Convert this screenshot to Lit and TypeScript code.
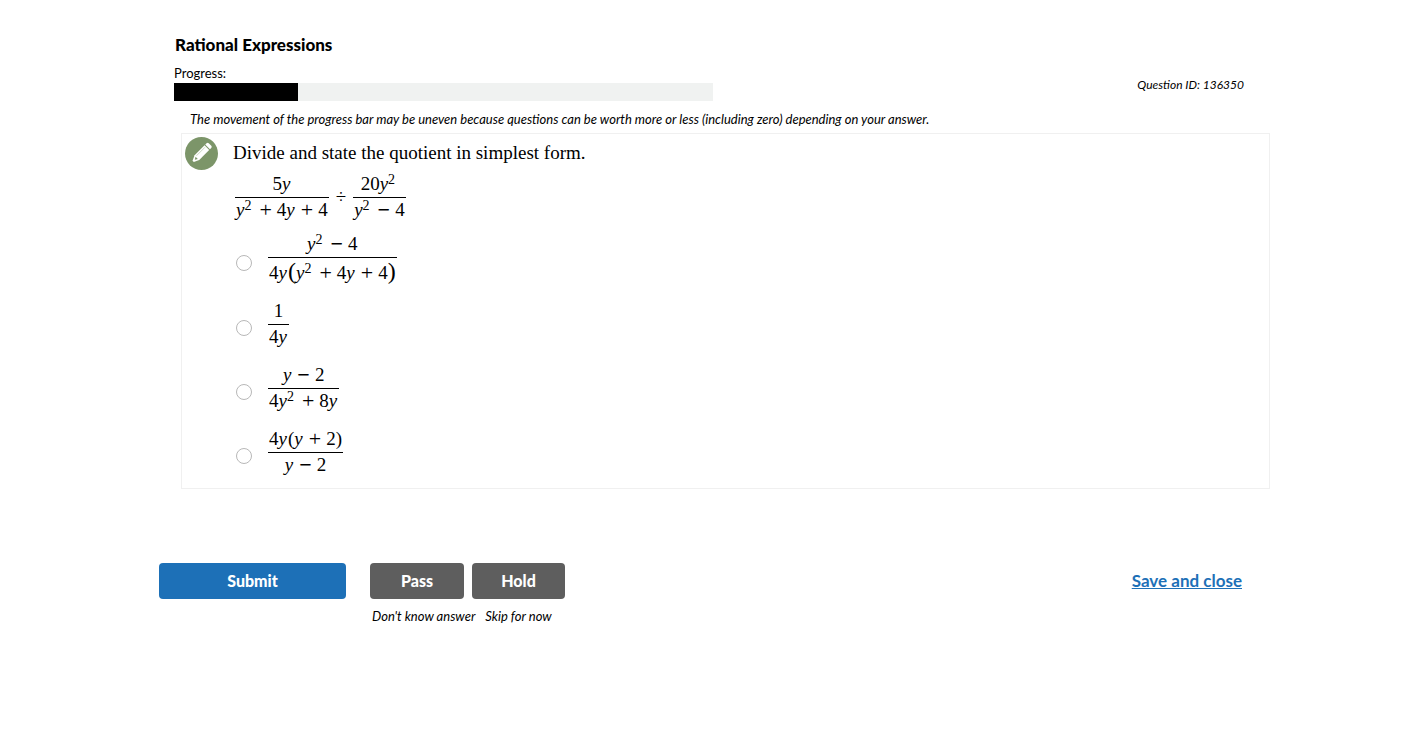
import { LitElement, html, css, TemplateResult } from "lit";
import { customElement, property, state } from "lit/decorators.js";

const plus = html`<span class="op">+</span>`;
const minus = html`<span class="op minus">−</span>`;
const y = html`<i>y</i>`;
const ySquared = html`<i>y</i><sup>2</sup>`;

const fraction = (label: string, top: TemplateResult, bottom: TemplateResult) => html`
  <span class="fraction" role="math" aria-label=${label}>
    <span class="term top">${top}</span>
    <span class="term bottom">${bottom}</span>
  </span>
`;

const choices = [
  fraction(
    "(y^2 - 4) / (4y(y^2 + 4y + 4))",
    html`${ySquared}${minus}4`,
    html`4${y}<span class="paren">(</span>${ySquared}${plus}4${y}${plus}4<span class="paren">)</span>`
  ),
  fraction("1 / 4y", html`1`, html`4${y}`),
  fraction("(y - 2) / (4y^2 + 8y)", html`${y}${minus}2`, html`4${ySquared}${plus}8${y}`),
  fraction("4y(y + 2) / (y - 2)", html`4${y}(${y}${plus}2)`, html`${y}${minus}2`),
];

@customElement("progress-meter")
export class ProgressMeter extends LitElement {
  @property({ type: Number }) value = 0;

  static styles = css`
    :host {
      display: block;
      height: 18px;
      background: #f0f2f1;
    }
    .fill {
      height: 100%;
      background: #000;
    }
  `;

  render() {
    return html`<div
      class="fill"
      role="progressbar"
      aria-label="Progress"
      aria-valuenow=${this.value}
      style="width: ${this.value}%"
    ></div>`;
  }
}

@customElement("app-root")
export class AppRoot extends LitElement {
  @state() private selected = -1;

  static styles = css`
    :host {
      display: block;
      background: #fff;
      color: #000;
      font-family: "Proxima Nova", Lato, sans-serif;
      font-size: 13px;
      line-height: 16px;
    }
    * {
      box-sizing: border-box;
    }
    main {
      padding: 35px 135px 40px 159px;
    }
    h1 {
      margin: 0 0 10px 16px;
      font-size: 17px;
      line-height: 20px;
      font-weight: 900;
    }
    .status {
      display: flex;
      justify-content: space-between;
      align-items: center;
      padding: 0 26px 0 15px;
    }
    .progress {
      flex: 0 0 50.4%;
    }
    .progress-label {
      margin-bottom: 2px;
    }
    .small {
      font-style: italic;
    }
    .question-id {
      margin-top: 4px;
      font-size: 12px;
    }
    .note {
      margin: 10px 0 6px 31px;
    }
    .question {
      display: grid;
      grid-template-columns: 33px 1fr;
      column-gap: 15px;
      align-items: start;
      margin-left: 22px;
      padding: 3px 3px 4px;
      border: 1px solid #f0f0f0;
      font-family: "Liberation Serif", serif;
      font-size: 19px;
      line-height: 24px;
    }
    .badge {
      display: block;
      width: 33px;
      height: 33px;
    }
    .prompt {
      margin: 4px 0 7px;
    }
    .expression {
      display: flex;
      align-items: center;
      gap: 7px;
      margin: 0 0 3px 2px;
    }
    .fraction {
      display: inline-flex;
      flex-direction: column;
      align-items: stretch;
      text-align: center;
      white-space: nowrap;
    }
    .term {
      padding: 0 1px;
    }
    .term i {
      margin-right: 1px;
    }
    .top {
      padding-bottom: 1px;
    }
    .bottom {
      border-top: 1px solid #000;
    }
    .term sup {
      margin: 0 3px 0 -1px;
      font-size: 14px;
      line-height: 0;
      vertical-align: 6px;
    }
    .op {
      margin: 0 5px;
      font-size: 22px;
      line-height: 0;
      vertical-align: -1px;
    }
    .minus {
      font-weight: 700;
    }
    .paren {
      font-size: 24px;
      line-height: 26px;
    }
    fieldset {
      margin: 0;
      padding: 0 0 0 3px;
      border: 0;
      min-width: 0;
    }
    .choice {
      display: flex;
      align-items: center;
      gap: 16px;
      padding: 7px 0;
      width: max-content;
    }
    .choice input {
      appearance: none;
      width: 16px;
      height: 16px;
      margin: 8px 0 0;
      border: 1px solid #b8b8b8;
      border-radius: 50%;
      background: #fff;
    }
    .choice input:checked {
      border: 5px solid #1d70b7;
    }
    .actions {
      display: grid;
      grid-template-columns: 203px 94px 93px 1fr;
      column-gap: 8px;
      align-items: center;
      margin-top: 74px;
    }
    button {
      height: 36px;
      padding: 0;
      border: 0;
      border-radius: 4px;
      background: #5e5e5e;
      color: #fff;
      font: 900 16px/20px "Proxima Nova", Lato, sans-serif;
      cursor: pointer;
    }
    .submit {
      margin-right: 16px;
      background: #1d70b7;
    }
    .save {
      justify-self: end;
      margin-right: 28px;
      color: #1d70b7;
      font-size: 17px;
      line-height: 20px;
      font-weight: 700;
    }
    .hint {
      margin-top: 9px;
      padding-left: 2px;
      white-space: nowrap;
    }
    .centered {
      padding: 0;
      text-align: center;
    }
  `;

  render() {
    return html`
      <main>
        <h1>Rational Expressions</h1>
        <div class="status">
          <div class="progress">
            <div class="progress-label">Progress:</div>
            <progress-meter .value=${23}></progress-meter>
          </div>
          <div class="small question-id">Question ID: 136350</div>
        </div>
        <p class="small note">
          The movement of the progress bar may be uneven because questions can be worth more or less
          (including zero) depending on your answer.
        </p>
        <section class="question">
          <svg class="badge" viewBox="0 0 33 33" aria-hidden="true">
            <circle cx="16.5" cy="16.5" r="16.5" fill="#7c9569" />
            <g transform="translate(16.5 16) rotate(45)" fill="#fff">
              <path d="M-3.300-7.600h6.600V6.500L.9 11.800h-1.800L-3.300 6.500z" />
              <path d="M-3.300-8.600v-1.900q0-1.500 1.500-1.500h3.600q1.500 0 1.500 1.500v1.900z" />
              <path d="M-1.600 6.800l1.600 2.600 1.600-2.600z" fill="#7c9569" />
              <path d="M-1.600-6.500V5.500" stroke="#7c9569" stroke-width=".4" />
            </g>
          </svg>
          <div>
            <p class="prompt" id="prompt">Divide and state the quotient in simplest form.</p>
            <div class="expression">
              ${fraction("5y / (y^2 + 4y + 4)", html`5${y}`, html`${ySquared}${plus}4${y}${plus}4`)}
              <span>÷</span>
              ${fraction("20y^2 / (y^2 - 4)", html`20${ySquared}`, html`${ySquared}${minus}4`)}
            </div>
            <fieldset aria-labelledby="prompt">
              ${choices.map(
                (choice, i) => html`
                  <label class="choice">
                    <input
                      type="radio"
                      name="answer"
                      .checked=${this.selected === i}
                      @change=${() => (this.selected = i)}
                    />
                    ${choice}
                  </label>
                `
              )}
            </fieldset>
          </div>
        </section>
        <div class="actions">
          <button class="submit" type="submit">Submit</button>
          <button type="button">Pass</button>
          <button type="button">Hold</button>
          <a class="save" href="#">Save and close</a>
          <span></span>
          <span class="small hint">Don't know answer</span>
          <span class="small hint centered">Skip for now</span>
        </div>
      </main>
    `;
  }
}
